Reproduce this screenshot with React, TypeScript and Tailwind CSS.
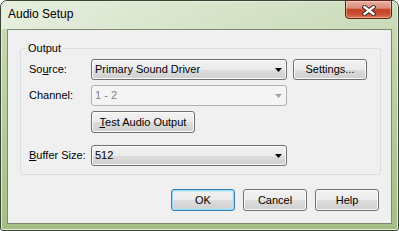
import React from "react";

const btnBase =
  "flex items-center justify-center rounded-[3px] border text-[11px] leading-[13px] text-black bg-[linear-gradient(#f2f2f2_0%,#ebebeb_50%,#dddddd_50%,#cfcfcf_100%)]";

function Arrow({ color }: { color: string }) {
  return (
    <svg width="7" height="4" viewBox="0 0 7 4" className="block shrink-0">
      <path d="M0 0 H7 L3.5 4 Z" fill={color} />
    </svg>
  );
}

function Combo({ text, disabled }: { text: string; disabled?: boolean }) {
  return (
    <div
      className={
        disabled
          ? "flex h-[21px] w-[196px] items-center justify-between rounded-[3px] border border-[#adb2b5] bg-[#f4f4f4] pl-[3px] pr-[4px] text-[11px] leading-[13px] text-[#838383]"
          : "flex h-[21px] w-[196px] items-center justify-between rounded-[3px] border border-[#707070] bg-[linear-gradient(#f2f2f2_0%,#ebebeb_50%,#dddddd_50%,#cfcfcf_100%)] pl-[3px] pr-[4px] text-[11px] leading-[13px] text-black shadow-[inset_0_0_0_1px_#fbfbfb]"
      }
    >
      <span>{text}</span>
      <Arrow color={disabled ? "#a3a3a3" : "#000000"} />
    </div>
  );
}

export default function App() {
  return (
    <div className="font-['Liberation_Sans',Arial,sans-serif]">
      <div className="relative flex h-[231px] w-[399px] flex-col rounded-t-[7px] rounded-b-[3px] border border-[#3b4236] bg-[linear-gradient(to_bottom,#cbdcba,#a3bf82)]">
        <div className="flex flex-1 flex-col rounded-t-[6px] rounded-b-[2px] border border-[#e4eed9]">
          {/* title bar */}
          <div className="h-[27px] shrink-0 rounded-t-[5px] bg-[linear-gradient(to_right,rgba(255,255,255,0.55),rgba(255,255,255,0.3)_45%,rgba(255,255,255,0.05))] pl-[6px] pt-[5px]">
            <span className="block text-[12px] leading-[14px] text-black">Audio Setup</span>
          </div>
          {/* client wrapper */}
          <div className="flex flex-1 flex-col px-[5px] pb-[5px]">
            <div className="flex flex-1 flex-col border border-[#7b8a70] bg-[#f0f0f0]">
              <fieldset className="ml-[12px] mt-[12px] w-[361px] rounded-[3px] border border-[#d5dfe5] px-[5px] pb-[8px] pt-[4px]">
                <legend className="px-[2px] text-[11px] leading-[13px] text-black">Output</legend>
                <div className="flex flex-col pl-[3px] text-[11px] leading-[13px] text-black">
                  <div className="flex items-center">
                    <span className="w-[62px]">
                      So<u>u</u>rce:
                    </span>
                    <Combo text="Primary Sound Driver" />
                    <div
                      className={`${btnBase} ml-[6px] h-[21px] w-[74px] border-[#707070] shadow-[inset_0_0_0_1px_#fbfbfb]`}
                    >
                      Settings...
                    </div>
                  </div>
                  <div className="mt-[5px] flex items-center">
                    <span className="w-[62px]">Channel:</span>
                    <Combo text="1 - 2" disabled />
                  </div>
                  <div className="mt-[5px] flex items-center">
                    <span className="w-[62px]" />
                    <div
                      className={`${btnBase} h-[22px] w-[104px] border-[#707070] shadow-[inset_0_0_0_1px_#fbfbfb]`}
                    >
                      <span>
                        <u>T</u>est Audio Output
                      </span>
                    </div>
                  </div>
                  <div className="mt-[12px] flex items-center">
                    <span className="w-[62px]">
                      <u>B</u>uffer Size:
                    </span>
                    <Combo text="512" />
                  </div>
                </div>
              </fieldset>
              <div className="mt-[14px] flex justify-end gap-[8px] pr-[12px]">
                <div
                  className={`${btnBase} h-[22px] w-[64px] border-[#3c7fb1] shadow-[inset_0_0_0_1px_#97daf7,inset_0_0_0_2px_rgba(190,235,252,0.6)]`}
                >
                  OK
                </div>
                <div
                  className={`${btnBase} h-[22px] w-[64px] border-[#707070] shadow-[inset_0_0_0_1px_#fbfbfb]`}
                >
                  Cancel
                </div>
                <div
                  className={`${btnBase} h-[22px] w-[64px] border-[#707070] shadow-[inset_0_0_0_1px_#fbfbfb]`}
                >
                  Help
                </div>
              </div>
            </div>
          </div>
        </div>
        {/* close button over the frame */}
        <div className="absolute right-[6px] top-[-1px] flex h-[19px] w-[47px] items-center justify-center rounded-b-[4px] rounded-t-[1px] border border-[#5c2619] bg-[linear-gradient(to_bottom,#eab0a2_0%,#dc8c7a_42%,#c5452c_50%,#c64a2f_72%,#e27450_100%)] shadow-[inset_0_0_0_1px_rgba(255,255,255,0.35)]">
          <svg width="14" height="11" viewBox="0 0 14 11" className="mt-[1px] block">
            <path d="M2.5 2 L11.5 9 M11.5 2 L2.5 9" stroke="#3d2a26" strokeWidth="4.2" strokeLinecap="square" fill="none" />
            <path d="M2.5 2 L11.5 9 M11.5 2 L2.5 9" stroke="#ffffff" strokeWidth="2.3" strokeLinecap="square" fill="none" />
          </svg>
        </div>
      </div>
    </div>
  );
}
